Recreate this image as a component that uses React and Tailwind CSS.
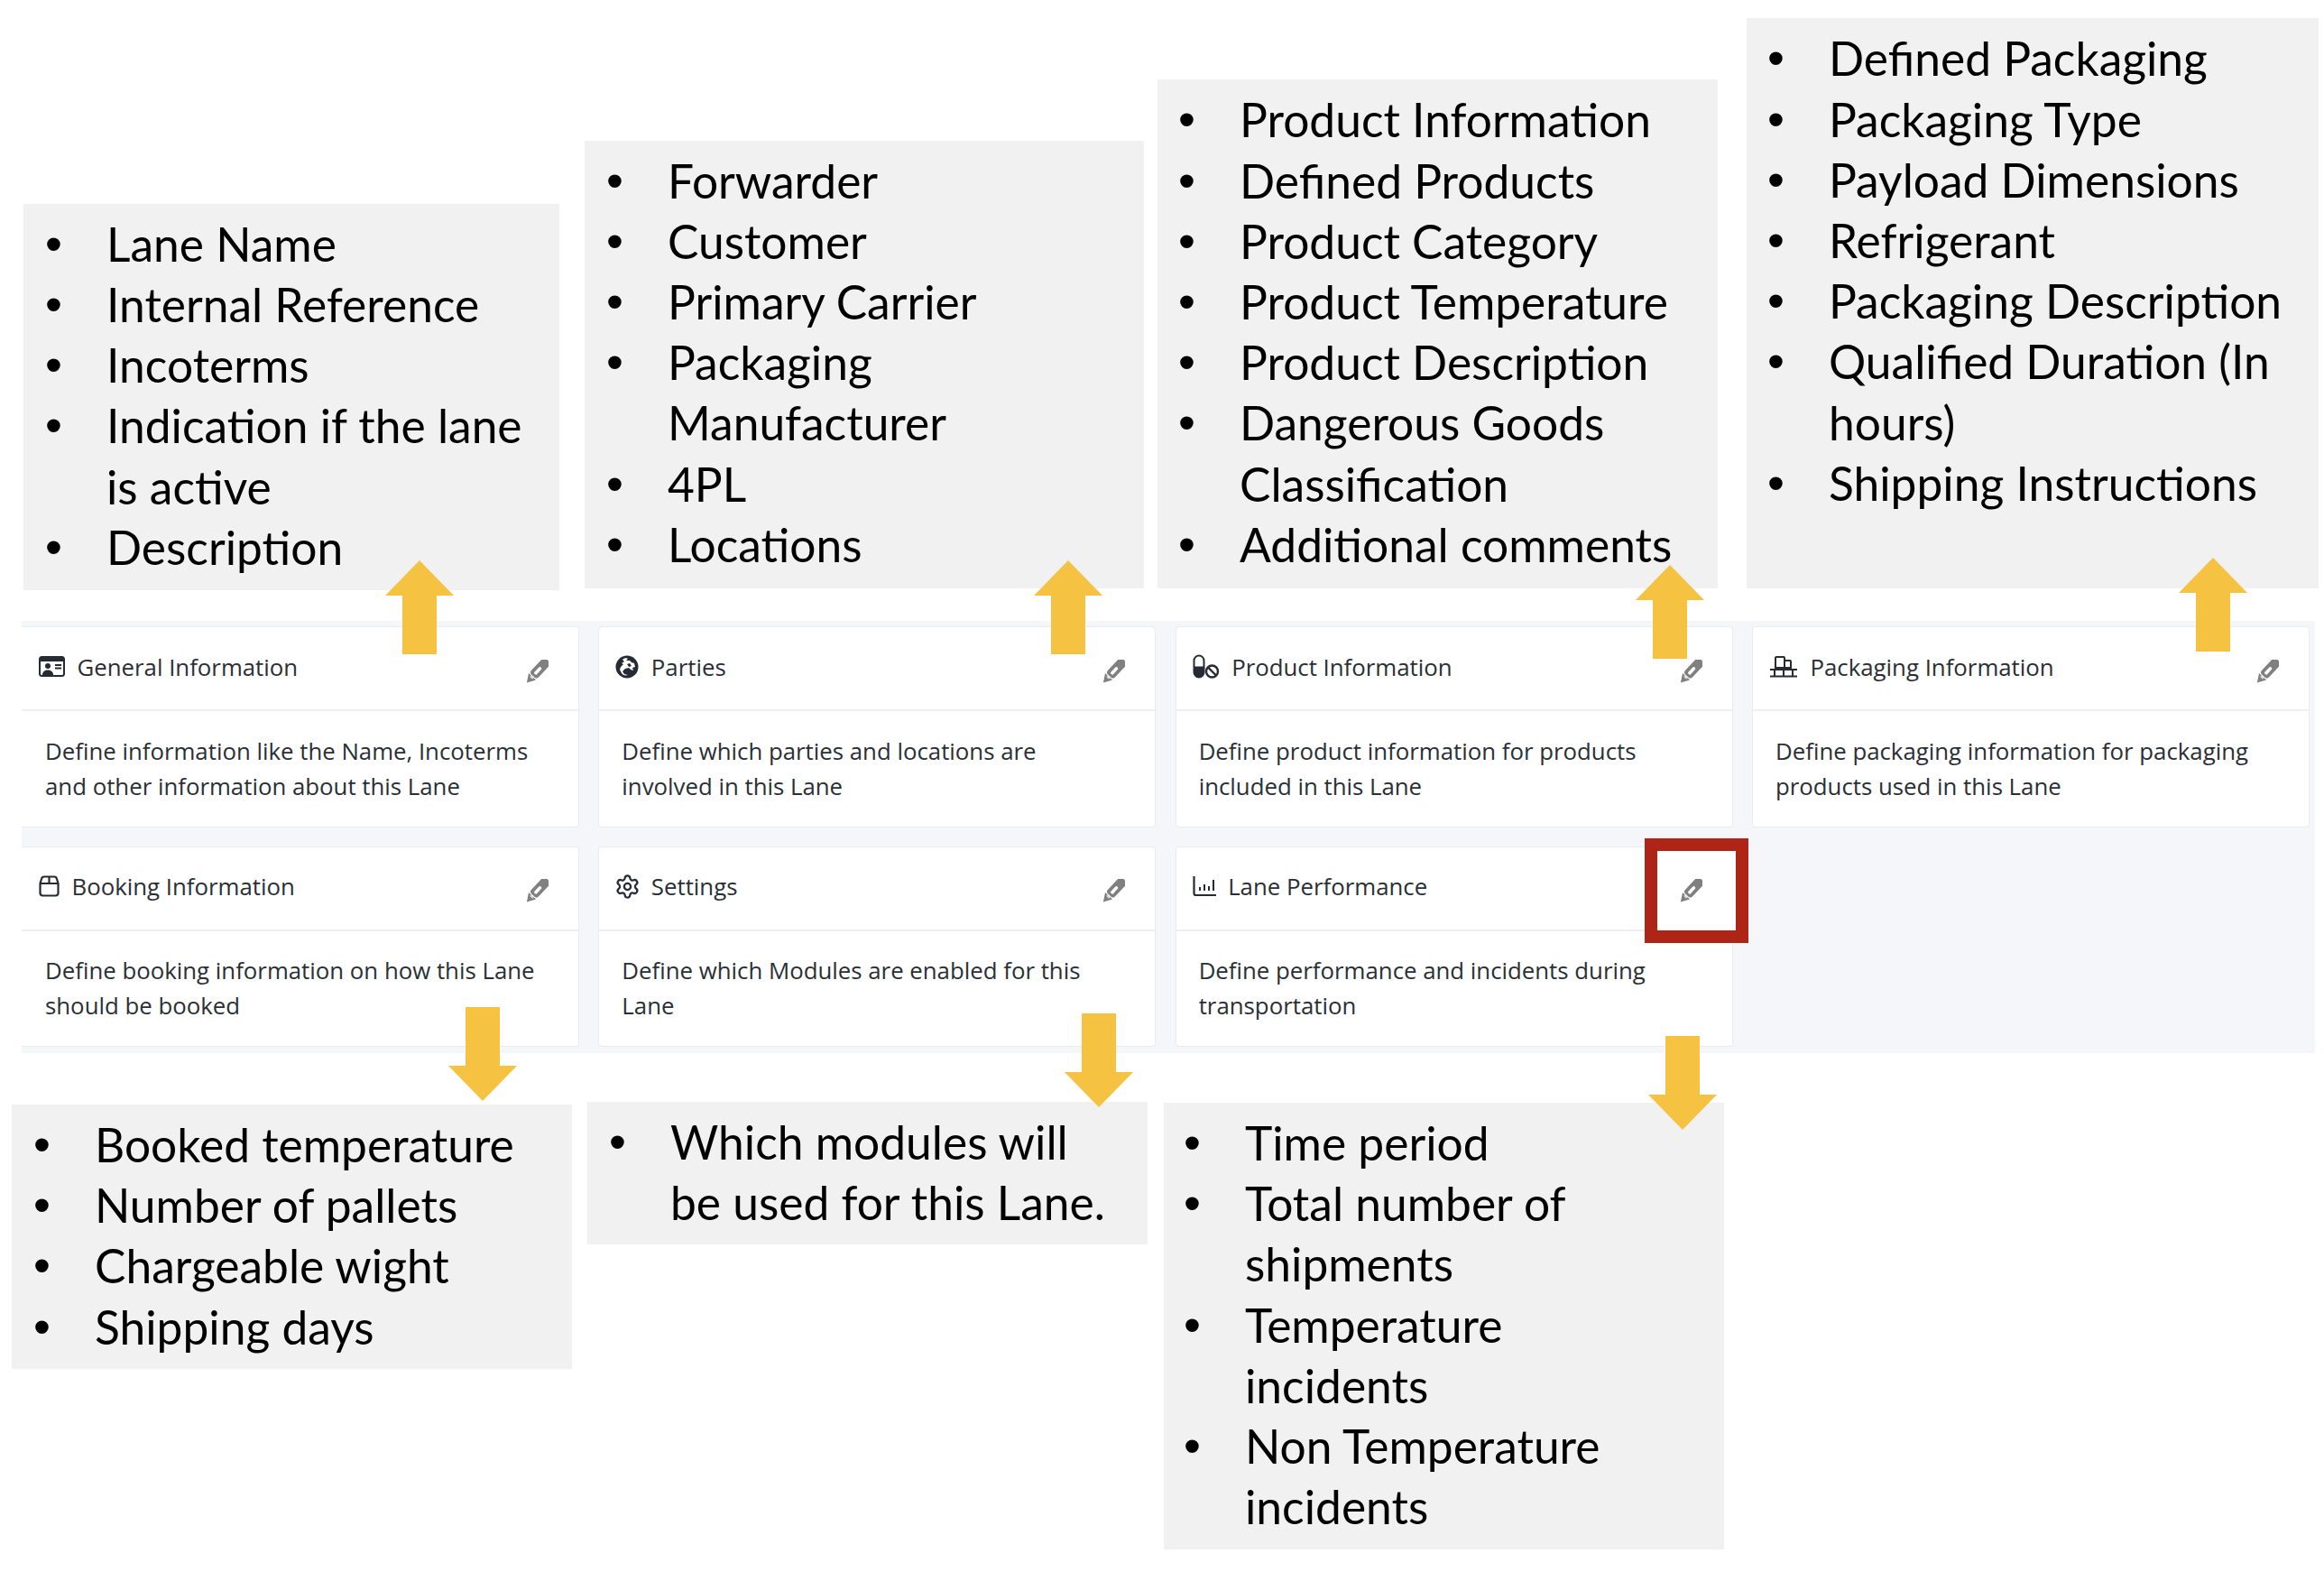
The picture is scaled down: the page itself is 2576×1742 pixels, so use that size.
import React from "react";
import { Settings } from "lucide-react";

const Box = ({ items, className }) => (
  <ul className={`bg-[#f1f1f1] pt-[11px] flex flex-col font-['Lato',sans-serif] text-[51.5px] leading-[67.2px] text-black ${className}`}>
    {items.map((t) => (
      <li key={t} className="flex">
        <span className="w-[68px] shrink-0 font-['Liberation_Sans',sans-serif] text-[54px]">•</span>
        <span className="whitespace-pre">{t}</span>
      </li>
    ))}
  </ul>
);

const Arrow = ({ className }) => (
  <svg viewBox="0 0 76 104" className={`absolute w-[76px] h-[104px] ${className}`}>
    <polygon points="38,0 76,39 57,39 57,104 19,104 19,39 0,39" fill="#f5c242" />
  </svg>
);

const Pencil = () => (
  <svg viewBox="0 0 26 26" className="w-[26px] h-[27px] shrink-0">
    <g transform="translate(13.5 12.5) rotate(43)">
      <rect x="-5.5" y="-17" width="11" height="24" rx="3.5" fill="#808080" />
      <rect x="-1.8" y="-6" width="3.6" height="10" rx="1.4" fill="#fff" />
      <polygon points="-5.5,8 5.5,8 0,17" fill="#808080" />
      <rect x="-2" y="7" width="4" height="3" fill="#fff" opacity="0.7" />
    </g>
  </svg>
);

const IdIcon = () => (
  <svg viewBox="0 0 29 23" className="w-[29px] h-[23px]">
    <rect x="1" y="1" width="27" height="21" rx="2.5" fill="none" stroke="#262b33" strokeWidth="2" />
    <rect x="1" y="1" width="27" height="5" fill="#262b33" />
    <circle cx="10" cy="11" r="3" fill="#262b33" />
    <path d="M4 21c0-4 3-5.5 6-5.5s6 1.5 6 5.5z" fill="#262b33" />
    <path d="M18 10h7M18 13.5h7" stroke="#262b33" strokeWidth="2" />
  </svg>
);

const GlobeIcon = () => (
  <svg viewBox="0 0 26 26" className="w-[26px] h-[26px]">
    <circle cx="13" cy="13" r="12.5" fill="#262b33" />
    <path d="M8 5c2-2 5-2 6-1l-2 2 4 0 2 2 3 1 1 4-3 1 1 3-3-1-2-2-4 1-3 3 2 3 4 1c-3 1-6 0-7-2l-2-4 1-3 3-3-2-1 3-2z" fill="#fff" />
    <path d="M13 10l3-1 2 3-3 1z" fill="#262b33" />
  </svg>
);

const PillIcon = () => (
  <svg viewBox="0 0 30 28" className="w-[30px] h-[28px]">
    <rect x="1.5" y="1.5" width="11" height="24" rx="5.5" fill="none" stroke="#262b33" strokeWidth="2" />
    <path d="M1.5 13.5h11v6.5a5.5 5.5 0 0 1-11 0z" fill="#262b33" />
    <circle cx="21.5" cy="19" r="6.5" fill="#fff" stroke="#262b33" strokeWidth="2.4" />
    <path d="M17 14.5l9 9" stroke="#262b33" strokeWidth="2.4" />
  </svg>
);

const PalletIcon = () => (
  <svg viewBox="0 0 32 25" className="w-[32px] h-[25px]" fill="none" stroke="#262b33" strokeWidth="2">
    <path d="M7 14V3a1 1 0 0 1 1-1h8a1 1 0 0 1 1 1v11H7z" />
    <path d="M17 6h6a1 1 0 0 1 1 1v7h-7" />
    <path d="M1 16h30M1 23.5h30M6 16v7.5M16 16v7.5M26 16v7.5" />
  </svg>
);

const BoxIcon = () => (
  <svg viewBox="0 0 23 24" className="w-[23px] h-[24px]" fill="none" stroke="#262b33" strokeWidth="2.2">
    <path d="M1.5 9v10.500a3 3 0 0 0 3 3h14a3 3 0 0 0 3-3V9l-1.5-5a3 3 0 0 0-3-2.5H6A3 3 0 0 0 3 4z" />
    <path d="M1.5 9h20M11.5 1.5V9" />
  </svg>
);

const GearIcon = () => <Settings className="w-[29px] h-[29px] -mx-[1.5px] text-[#262b33]" strokeWidth={1.9} />;

const ChartIcon = () => (
  <svg viewBox="0 0 26 24" className="w-[26px] h-[24px]" fill="none" stroke="#262b33" strokeWidth="2">
    <path d="M1.5 1v19a2 2 0 0 0 2 2H26" strokeWidth="2.2" />
    <path d="M8 13v4M13 10v7M18 12v5M23 5v12" />
  </svg>
);

const Card = ({ icon, title, lines, pencil = true, flush = false }) => (
  <div className={`bg-white h-[222.5px] border border-[#e9ebf0] flex flex-col ${flush ? "border-l-0 rounded-r-[4px]" : "rounded-[4px]"}`}>
    <div className={`h-[93px] shrink-0 border-b-2 border-[#eff0f3] flex items-center gap-[13.5px] pr-[33px] ${flush ? "pl-[19px]" : "pl-[18px]"}`}>
      <span className="flex items-center justify-center shrink-0 -mt-[4px]">{icon}</span>
      <span className="text-[25.8px] leading-[34px] text-[#2a2f36] flex-1 -mt-[4px]">{title}</span>
      {pencil && <span className="mt-[7px]"><Pencil /></span>}
    </div>
    <p className={`pt-[24.5px] text-[25.8px] leading-[39px] text-[#2a2f36] whitespace-pre ${flush ? "pl-[26px]" : "pl-[25px]"}`}>{lines}</p>
  </div>
);

export default function App() {
  return (
    <div className="relative w-[2576px] h-[1742px] bg-white overflow-hidden font-['Open_Sans',sans-serif]">
      <div className="h-[688px] flex items-end pb-[36px]">
        <Box className="ml-[26px] pl-[24px] w-[594px] -mb-[2px] pb-[14px]" items={["Lane Name", "Internal Reference", "Incoterms", "Indication if the lane\nis active", "Description"]} />
        <Box className="ml-[28px] pl-[24px] w-[620px] pb-[15px]" items={["Forwarder", "Customer", "Primary Carrier", "Packaging\nManufacturer", "4PL", "Locations"]} />
        <Box className="ml-[15px] pl-[23px] w-[621px] pb-[15px]" items={["Product Information", "Defined Products", "Product Category", "Product Temperature", "Product Description", "Dangerous Goods\nClassification", "Additional comments"]} />
        <Box className="ml-[32px] pl-[23px] w-[634px] pb-[83px]" items={["Defined Packaging", "Packaging Type", "Payload Dimensions", "Refrigerant", "Packaging Description", "Qualified Duration (In\nhours)", "Shipping Instructions"]} />
      </div>

      <div className="ml-[24px] w-[2542px] bg-[#f4f6fa] pt-[6px] pb-[7px] grid grid-cols-[618px_618px_618px_618px] gap-x-[21.33px] gap-y-[21px]">
        <Card flush icon={<IdIcon />} title="General Information" lines={"Define information like the Name, Incoterms\nand other information about this Lane"} />
        <Card icon={<GlobeIcon />} title="Parties" lines={"Define which parties and locations are\ninvolved in this Lane"} />
        <Card icon={<PillIcon />} title="Product Information" lines={"Define product information for products\nincluded in this Lane"} />
        <Card icon={<PalletIcon />} title="Packaging Information" lines={"Define packaging information for packaging\nproducts used in this Lane"} />
        <Card flush icon={<BoxIcon />} title="Booking Information" lines={"Define booking information on how this Lane\nshould be booked"} />
        <Card icon={<GearIcon />} title="Settings" lines={"Define which Modules are enabled for this\nLane"} />
        <Card pencil={false} icon={<ChartIcon />} title="Lane Performance" lines={"Define performance and incidents during\ntransportation"} />
      </div>

      <div className="flex items-start">
        <Box className="ml-[13px] pl-[24px] mt-[57px] w-[621px] pb-[13px]" items={["Booked temperature", "Number of pallets", "Chargeable wight", "Shipping days"]} />
        <Box className="ml-[17px] pl-[24px] mt-[54px] w-[621px] pb-[13px]" items={["Which modules will\nbe used for this Lane."]} />
        <Box className="ml-[18px] pl-[22px] mt-[55px] w-[621px] pb-[14px]" items={["Time period", "Total number of\nshipments", "Temperature\nincidents", "Non Temperature\nincidents"]} />
      </div>

      <div className="absolute left-[1823px] top-[929px] w-[115px] h-[116px] border-[14.5px] border-[#ae2417] bg-white flex items-center justify-center">
        <span className="mt-[1px] mr-[14px]"><Pencil /></span>
      </div>

      <Arrow className="left-[427px] top-[621px]" />
      <Arrow className="left-[1146px] top-[621px]" />
      <Arrow className="left-[1813px] top-[626px]" />
      <Arrow className="left-[2415px] top-[618px]" />
      <Arrow className="left-[497px] top-[1116px] rotate-180" />
      <Arrow className="left-[1180px] top-[1123px] rotate-180" />
      <Arrow className="left-[1827px] top-[1148px] rotate-180" />
    </div>
  );
}
